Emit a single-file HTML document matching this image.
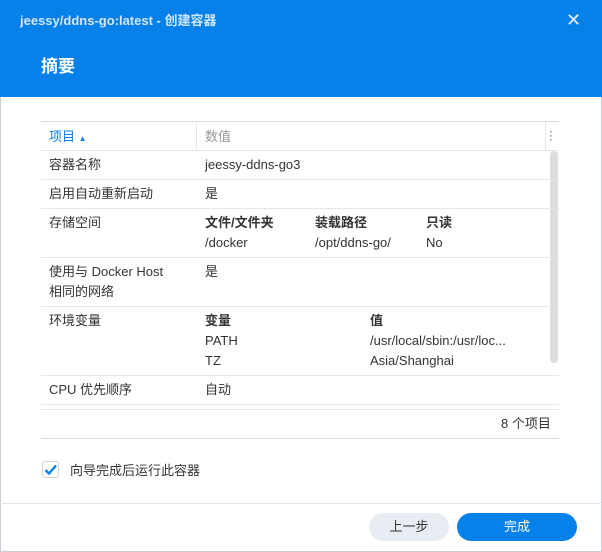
<!DOCTYPE html>
<html><head><meta charset="utf-8"><style>
*{margin:0;padding:0;box-sizing:border-box}
body{width:602px;height:552px;background:#fff;font-family:"Liberation Sans","Noto Sans CJK SC",sans-serif;font-size:13px;color:#333;position:relative;overflow:hidden}
.win{position:absolute;left:0;top:0;width:602px;height:552px;border:1px solid #c9ced6;border-top:none}
.hd{position:absolute;left:0;top:0;width:602px;height:97px;background:#0781ea}
.t1{position:absolute;left:20px;top:13px;color:#cfe6fb;font-weight:bold;font-size:13px;line-height:16px}
.x{position:absolute;left:566px;top:10px;color:#e6f2fd;font-size:18px}
.t2{position:absolute;left:41px;top:57px;color:#fff;font-size:17px;font-weight:bold;line-height:20px}
.a{position:absolute}
.hl{position:absolute;left:41px;width:518px;height:1px;background:#e3e8ee}
.c{position:absolute;white-space:nowrap;line-height:16px;margin-top:1px}
.b{font-weight:bold}
</style></head><body>
<div class="win"></div>
<div class="hd"></div>
<div class="t1">jeessy/ddns-go:latest - 创建容器</div>
<div class="x">✕</div>
<div class="t2">摘要</div>

<div class="hl" style="top:121px;background:#d7dde4"></div>
<div class="a" style="left:196px;top:122px;width:1px;height:28px;background:#e3e8ee"></div>
<div class="a" style="left:545px;top:122px;width:1px;height:28px;background:#e3e8ee"></div>
<div class="c" style="left:49px;top:128px;color:#0781ea">项目 <span style="font-size:8px">▲</span></div>
<div class="c" style="left:205px;top:128px;color:#999">数值</div>
<div class="c" style="left:549px;top:128px;color:#666;font-size:12px;line-height:4px">·<br>·<br>·</div>
<div class="hl" style="top:150px"></div>
<div class="a" style="left:550px;top:151px;width:8px;height:212px;background:#dedede;border-radius:4px"></div>

<div class="c" style="left:49px;top:156px">容器名称</div><div class="c" style="left:205px;top:156px">jeessy-ddns-go3</div>
<div class="hl" style="top:179px"></div>
<div class="c" style="left:49px;top:185px">启用自动重新启动</div><div class="c" style="left:205px;top:185px">是</div>
<div class="hl" style="top:208px"></div>
<div class="c" style="left:49px;top:214px">存储空间</div>
<div class="c b" style="left:205px;top:214px">文件/文件夹</div><div class="c b" style="left:315px;top:214px">装载路径</div><div class="c b" style="left:426px;top:214px">只读</div>
<div class="c" style="left:205px;top:234px">/docker</div><div class="c" style="left:315px;top:234px">/opt/ddns-go/</div><div class="c" style="left:426px;top:234px">No</div>
<div class="hl" style="top:257px"></div>
<div class="c" style="left:49px;top:261px;line-height:20px">使用与 Docker Host<br>相同的网络</div><div class="c" style="left:205px;top:263px">是</div>
<div class="hl" style="top:306px"></div>
<div class="c" style="left:49px;top:312px">环境变量</div>
<div class="c b" style="left:205px;top:312px">变量</div><div class="c b" style="left:370px;top:312px">值</div>
<div class="c" style="left:205px;top:332px">PATH</div><div class="c" style="left:370px;top:332px">/usr/local/sbin:/usr/loc...</div>
<div class="c" style="left:205px;top:352px">TZ</div><div class="c" style="left:370px;top:352px">Asia/Shanghai</div>
<div class="hl" style="top:375px"></div>
<div class="c" style="left:49px;top:381px">CPU 优先顺序</div><div class="c" style="left:205px;top:381px">自动</div>
<div class="hl" style="top:404px"></div>
<div class="hl" style="top:409px"></div>
<div class="c" style="left:501px;top:415px">8 个项目</div>
<div class="hl" style="top:438px;background:#d7dde4"></div>

<div class="a" style="left:42px;top:461px;width:17px;height:17px;border:1px solid #d0d6de;border-radius:3px"></div>
<svg class="a" style="left:42px;top:461px" width="17" height="17"><path d="M3.5 9 L7 12.5 L14 4.5" stroke="#0781ea" stroke-width="2.4" fill="none"/></svg>
<div class="c" style="left:70px;top:462px">向导完成后运行此容器</div>

<div class="a" style="left:0;top:503px;width:602px;height:1px;background:#e3e8ee"></div>
<div class="a" style="left:369px;top:513px;width:80px;height:28px;border-radius:14px;background:#e8edf3;text-align:center;line-height:28px">上一步</div>
<div class="a" style="left:457px;top:513px;width:120px;height:28px;border-radius:14px;background:#0781ea;color:#fff;text-align:center;line-height:28px">完成</div>
</body></html>
